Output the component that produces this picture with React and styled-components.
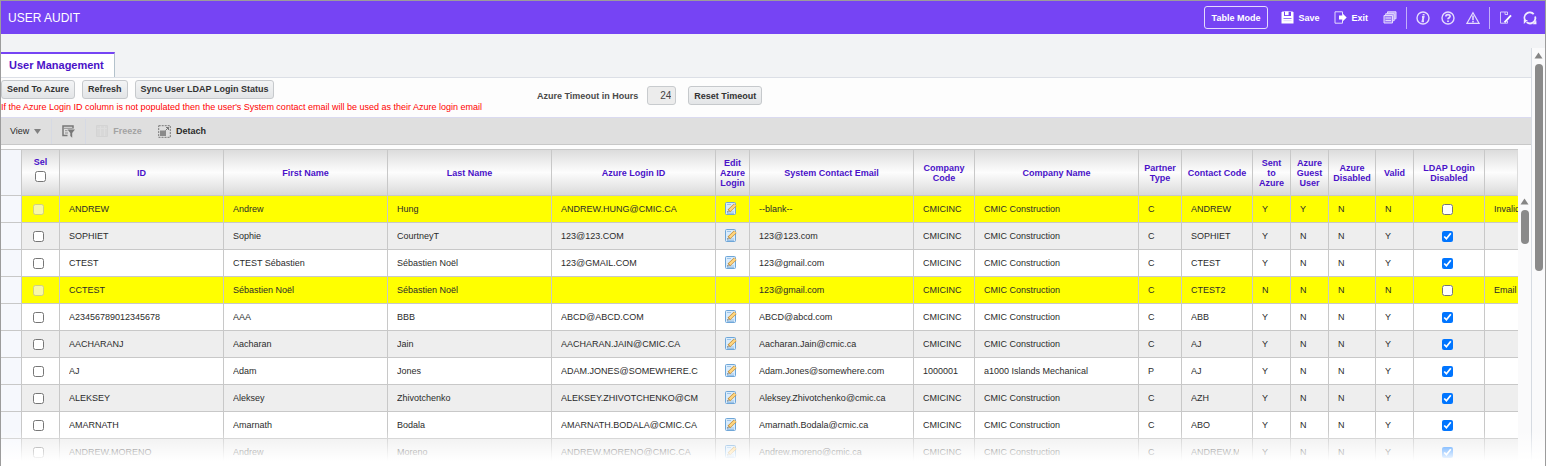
import { useState } from "react";
import styled, { createGlobalStyle } from "styled-components";

const GlobalStyle = createGlobalStyle`
  * {
    box-sizing: border-box;
  }
  body {
    margin: 0;
    overflow: hidden;
    background: #fff;
    color: #2b2b2b;
    font-family: "Liberation Sans", Arial, sans-serif;
    font-size: 9px;
  }
  button, input {
    font-family: inherit;
    font-size: inherit;
    margin: 0;
  }
`;

const Page = styled.div`
  position: relative;
  display: flex;
  flex-direction: column;
  height: 100vh;
  overflow: hidden;
  border: 1px solid #9c9c9c;
  border-bottom: 0;
  background: #f2f3f5;
`;
const Fade = styled.div`
  position: absolute;
  left: -1px;
  right: -1px;
  bottom: 0;
  height: 36px;
  background: linear-gradient(rgba(255, 255, 255, 0), #fff 86%);
  pointer-events: none;
`;

const Header = styled.header`
  display: flex;
  align-items: center;
  justify-content: space-between;
  flex: none;
  height: 33px;
  padding: 0 8px 0 7px;
  background: #7644f4;
  color: #fff;
`;
const Title = styled.h1`
  margin: 0;
  font-size: 12px;
  font-weight: 400;
`;
const Actions = styled.div`
  display: flex;
  align-items: center;
  gap: 11px;
`;
const ModeButton = styled.button`
  height: 23px;
  margin-right: 2px;
  padding: 0 7px;
  border: 1px solid #e4dafd;
  border-radius: 3px;
  background: transparent;
  color: #fff;
  font-weight: 700;
  white-space: nowrap;
`;
const HeaderButton = styled.button`
  display: flex;
  align-items: center;
  gap: 4px;
  padding: 0;
  margin-right: ${(props) => (props.$labelled ? "4px" : "0")};
  border: 0;
  background: transparent;
  color: #fff;
  font-weight: 700;
`;
const Rule = styled.span`
  width: 1px;
  height: 22px;
  margin: 0 -2px;
  background: #c3aefa;
`;

const Body = styled.div`
  display: flex;
  flex: 1;
  min-height: 0;
  padding-top: 14px;
`;
const Main = styled.main`
  display: flex;
  flex-direction: column;
  flex: 1;
  min-width: 0;
  border-right: 1px solid #d6dbe2;
  background: #fdfdfd;
`;
const Tabs = styled.nav`
  display: flex;
  padding-top: 4px;
  border-bottom: 1px solid #dcdfe6;
  background: #f2f3f5;
`;
const Tab = styled.a`
  height: 25px;
  padding: 0 10px 0 8px;
  border-top: 2px solid #7644f4;
  border-right: 1px solid #b4c2cc;
  background: #fff;
  color: #4a12c8;
  font-size: 11px;
  font-weight: 700;
  line-height: 22px;
  text-decoration: none;
`;

const Controls = styled.div`
  display: flex;
  align-items: center;
  gap: 55px;
  height: 39px;
`;
const ButtonRow = styled.div`
  display: flex;
  gap: 7px;
`;
const Button = styled.button`
  height: 19px;
  padding: 0 5px;
  border: 1px solid #c6c9cc;
  border-radius: 3px;
  background: linear-gradient(#f3f4f5, #e3e5e7);
  color: #333;
  font-weight: 700;
  white-space: nowrap;
`;
const Notice = styled.p`
  margin: 0;
  color: #f00;
  line-height: 17px;
  white-space: nowrap;
`;
const Timeout = styled.div`
  display: flex;
  align-items: center;
  padding-bottom: 4px;
`;
const TimeoutLabel = styled.label`
  margin-right: 9px;
  font-weight: 700;
  color: #4a4a4a;
`;
const TimeoutInput = styled.input`
  width: 29px;
  height: 19px;
  margin-right: 12px;
  padding: 0 4px;
  border: 1px solid #c8cbce;
  border-radius: 3px;
  background: #ececec;
  color: #444;
  font-size: 10px;
  text-align: right;
`;

const Toolbar = styled.div`
  display: flex;
  align-items: center;
  flex: none;
  height: 28px;
  margin-bottom: 4px;
  padding-left: 9px;
  border-top: 1px solid #dadaf0;
  border-bottom: 1px solid #c8c8c8;
  background: #dfdfdf;
`;
const ToolButton = styled.button`
  display: flex;
  align-items: center;
  gap: 5px;
  padding: 0;
  margin-right: ${(props) => props.$after || 0}px;
  border: 0;
  background: transparent;
  color: #2b2b2b;
  font-weight: ${(props) => (props.$bold ? 700 : 400)};
  &:disabled {
    color: #a3a3a3;
  }
`;
const ToolRule = styled.span`
  width: 1px;
  height: 25px;
  margin: 0 10px;
  background: #d6dae4;
`;

const GridArea = styled.div`
  display: flex;
  flex: 1;
  min-height: 0;
  overflow: hidden;
`;
const Table = styled.table`
  flex: 1;
  width: 100%;
  min-width: 0;
  table-layout: fixed;
  border-collapse: separate;
  border-spacing: 0;
  border-top: 1px solid #c8c8c8;
  align-self: flex-start;
`;
const HeadCell = styled.th`
  height: 46px;
  padding: 0 4px;
  border-right: 1px solid #c8c8c8;
  border-bottom: 1px solid #c8c8c8;
  background: linear-gradient(#dcdcdc, #fdfdfd 50%, #dadada);
  color: #4a12c8;
  font-weight: 700;
  line-height: 10px;
  text-align: center;
  &:first-child {
    background: #f4f6fb;
  }
  &:last-child {
    border-right-color: #dcdcdc;
  }
`;
const SelLabel = styled.label`
  display: flex;
  flex-direction: column;
  align-items: center;
  gap: 4px;
  padding-bottom: 6px;
`;
const Row = styled.tr`
  background: ${(props) => (props.$flagged ? "#ff0" : props.$even ? "#eee" : "#fff")};
`;
const Cell = styled.td`
  height: 27px;
  padding: 0 ${(props) => props.$right || 9}px 0 9px;
  border-right: 1px solid #c8c8c8;
  border-bottom: 1px solid #c8c8c8;
  vertical-align: middle;
  &:first-child {
    padding: 0;
    background: #f6f8fd;
  }
  &:last-child {
    padding-right: 0;
    border-right: 0;
  }
`;
const Text = styled.div`
  overflow: hidden;
  white-space: nowrap;
`;
const Check = styled.input`
  display: block;
  width: 11px;
  height: 11px;
  margin: 0 auto;
`;
const EditButton = styled.button`
  display: block;
  padding: 0;
  border: 0;
  background: transparent;
`;

const Track = styled.div`
  display: flex;
  flex-direction: column;
  align-items: center;
  flex: none;
  width: 13px;
  padding-top: ${(props) => props.$top}px;
  background: #fafafb;
`;
const Thumb = styled.div`
  width: 8px;
  height: ${(props) => props.$length}px;
  margin-top: 5px;
  border-radius: 4px;
  background: #8a8a8a;
`;

const SaveIcon = () => (
  <svg width="13" height="13" viewBox="0 0 13 13">
    <path fill="#fff" d="M1.5 .5H11.5l1 1v11H.5V1.500z" />
    <path fill="#7644f4" d="M3 1h7v4H3zM2.500 7.200h8v.8h-8z" />
    <path fill="#fff" d="M4 .5h3.600v3.600H4z" />
    <path fill="#cbbafa" d="M2.500 9.500h8v.6h-8z" />
  </svg>
);
const ExitIcon = () => (
  <svg width="13" height="13" viewBox="0 0 13 13">
    <path fill="none" stroke="#e4dafd" d="M8.500 3.500V.8H1v11.400h7.500V9.500" />
    <path fill="#fff" d="M5 4.500h3.300V2.300L12.700 6.500 8.300 10.700V8.500H5z" />
  </svg>
);
const WindowsIcon = () => (
  <svg width="14" height="13" viewBox="0 0 14 13">
    <path fill="#b79ff9" stroke="#e4dafd" d="M4.500 .8h8.500v7H4.500z" />
    <path fill="#a88af8" stroke="#e4dafd" d="M2.700 2.700h8.500v7H2.700z" />
    <path fill="#a080f7" stroke="#e4dafd" d="M1 4.500h8.500v7.500H1z" />
    <path stroke="#e4dafd" d="M2.500 7h5.500M2.500 9.500h5.500" />
  </svg>
);
const InfoIcon = () => (
  <svg width="14" height="14" viewBox="0 0 14 14" fill="none" stroke="#e4dafd">
    <circle cx="7" cy="7" r="6" strokeWidth="1.400" />
    <path strokeWidth="1.900" d="M6 6h1.500L6.500 10.200H8M7.600 2.900v1.700" />
  </svg>
);
const HelpIcon = () => (
  <svg width="14" height="14" viewBox="0 0 14 14" fill="none" stroke="#e4dafd">
    <circle cx="7" cy="7" r="6" strokeWidth="1.400" />
    <path strokeWidth="1.800" d="M4.900 5.500c0-2.600 4.200-2.500 4.200-.2C9.100 6.700 7 6.700 7 8.300M7 9.400v1.600" />
  </svg>
);
const WarningIcon = () => (
  <svg width="14" height="14" viewBox="0 0 14 14" fill="none" stroke="#e4dafd">
    <path strokeWidth="1.200" d="M7 1.800L13 12.300H1z" />
    <path strokeWidth="1.600" d="M7 4.500v4.700M7 10v1.500" />
  </svg>
);
const NoteIcon = () => (
  <svg width="13" height="13" viewBox="0 0 13 13" fill="none" stroke="#d6c8fc">
    <path d="M8.500 4V1H1.500v11.200H8.500V10M6 1v2.500h2.500" />
    <path stroke="#fff" strokeWidth="1.900" d="M12 4.300L5.500 11.300" />
  </svg>
);
const RefreshIcon = () => (
  <svg width="14" height="14" viewBox="0 0 14 14" fill="none" stroke="#f1ecfe">
    <path strokeWidth="1.800" d="M2.300 9.600A5.300 5.300 0 0 1 10.700 3.200M12.100 5.500A5.300 5.300 0 0 1 3.600 11.100" />
    <path fill="#f1ecfe" stroke="none" d="M.8 13V9l4.200 0zM9.500 13.200l3.800-4 .2 4z" />
  </svg>
);
const ArrowDown = () => (
  <svg width="7" height="5" viewBox="0 0 7 5">
    <path fill="#808080" d="M0 0h7L3.500 5z" />
  </svg>
);
const ArrowUp = () => (
  <svg width="9" height="7" viewBox="0 0 9 7">
    <path fill="#858585" d="M4.500 .5L8.500 6.500H.5z" />
  </svg>
);
const FilterIcon = () => (
  <svg width="13" height="13" viewBox="0 0 13 13">
    <path fill="none" stroke="#777" strokeWidth="1.500" d="M11 3.500V1H1v9.500h4.500" />
    <path fill="none" stroke="#8f8f8f" d="M1 3.300h9.500M3 5.700h2.500M3 8h3" />
    <path fill="#777" d="M5.500 4.500h7.500L10.200 8v4.700L8.300 11V8z" />
  </svg>
);
const FreezeIcon = () => (
  <svg width="12" height="12" viewBox="0 0 12 12">
    <path fill="#d8d8d8" stroke="#d4d4d4" d="M.5 .5h11v11H.5z" />
    <path stroke="#dedede" d="M4.500 1v10M8.500 1v10M1 3.500h10" />
  </svg>
);
const DetachIcon = () => (
  <svg width="13" height="13" viewBox="0 0 13 13">
    <path fill="none" stroke="#777" strokeDasharray="2 1" d="M.7 .7h11.600v11.600H.7z" />
    <path fill="#8a8a8a" d="M2 5.500h6v5.500H2z" />
    <path fill="none" stroke="#777" d="M7.500 5.500l3-3M8 2.500h2.500V5" />
  </svg>
);
const EditIcon = () => (
  <svg width="12" height="13" viewBox="0 0 12 13">
    <rect x=".5" y=".5" width="10" height="12" rx="1" fill="#d9ecfc" stroke="#6ea6d8" />
    <path stroke="#9cc3e8" d="M2 10h7M2 11.500h7M2 2.500h4" />
    <path stroke="#c08a35" strokeWidth="3.600" d="M3.800 9L10.300 2.800" />
    <path stroke="#ffd680" strokeWidth="2.300" d="M4.500 8.300L10.300 2.800" />
    <path fill="#5b4a35" d="M2.200 10.600l.5-1.700 1.200 1.200z" />
  </svg>
);

// width left out: the column takes what is left over
const columns = [
  { key: "id", label: "ID", width: 164, right: 17 },
  { key: "first", label: "First Name", width: 164, right: 17 },
  { key: "last", label: "Last Name", width: 164, right: 17 },
  { key: "login", label: "Azure Login ID", width: 164, right: 17 },
  { key: "edit", label: "Edit Azure Login", width: 34 },
  { key: "email", label: "System Contact Email", width: 164, right: 17 },
  { key: "code", label: "Company Code", width: 61 },
  { key: "company", label: "Company Name", width: 164, right: 17 },
  { key: "partner", label: "Partner Type", width: 43 },
  { key: "contact", label: "Contact Code", width: 71, right: 13 },
  { key: "sent", label: "Sent to Azure", width: 38 },
  { key: "guest", label: "Azure Guest User", width: 38 },
  { key: "disabled", label: "Azure Disabled", width: 47 },
  { key: "valid", label: "Valid", width: 38 },
  { key: "ldap", label: "LDAP Login Disabled", width: 71 },
  { key: "message", label: "" },
];

const cmic = { code: "CMICINC", company: "CMIC Construction", partner: "C", sent: "Y", guest: "N", disabled: "N", valid: "Y", ldap: true };

const users = [
  { ...cmic, id: "ANDREW", first: "Andrew", last: "Hung", login: "ANDREW.HUNG@CMIC.CA", email: "--blank--", contact: "ANDREW", guest: "Y", valid: "N", ldap: false, message: "Invalid", flagged: true },
  { ...cmic, id: "SOPHIET", first: "Sophie", last: "CourtneyT", login: "123@123.COM", email: "123@123.com", contact: "SOPHIET" },
  { ...cmic, id: "CTEST", first: "CTEST Sébastien", last: "Sébastien Noël", login: "123@GMAIL.COM", email: "123@gmail.com", contact: "CTEST" },
  { ...cmic, id: "CCTEST", first: "Sébastien Noël", last: "Sébastien Noël", login: "", email: "123@gmail.com", contact: "CTEST2", sent: "N", valid: "N", ldap: false, message: "Email", flagged: true },
  { ...cmic, id: "A23456789012345678", first: "AAA", last: "BBB", login: "ABCD@ABCD.COM", email: "ABCD@abcd.com", contact: "ABB" },
  { ...cmic, id: "AACHARANJ", first: "Aacharan", last: "Jain", login: "AACHARAN.JAIN@CMIC.CA", email: "Aacharan.Jain@cmic.ca", contact: "AJ" },
  { ...cmic, id: "AJ", first: "Adam", last: "Jones", login: "ADAM.JONES@SOMEWHERE.COM", email: "Adam.Jones@somewhere.com", code: "1000001", company: "a1000 Islands Mechanical", partner: "P", contact: "AJ" },
  { ...cmic, id: "ALEKSEY", first: "Aleksey", last: "Zhivotchenko", login: "ALEKSEY.ZHIVOTCHENKO@CMIC.CA", email: "Aleksey.Zhivotchenko@cmic.ca", contact: "AZH" },
  { ...cmic, id: "AMARNATH", first: "Amarnath", last: "Bodala", login: "AMARNATH.BODALA@CMIC.CA", email: "Amarnath.Bodala@cmic.ca", contact: "ABO" },
  { ...cmic, id: "ANDREW.MORENO", first: "Andrew", last: "Moreno", login: "ANDREW.MORENO@CMIC.CA", email: "Andrew.moreno@cmic.ca", contact: "ANDREW.M" },
];

function UserCell({ user, column }) {
  if (column.key === "ldap") {
    return (
      <Cell $right={13}>
        <Check type="checkbox" defaultChecked={user.ldap} aria-label={`LDAP login disabled for ${user.id}`} />
      </Cell>
    );
  }
  if (column.key === "edit") {
    return (
      <Cell>
        {user.login && (
          <EditButton aria-label={`Edit Azure login of ${user.id}`}>
            <EditIcon />
          </EditButton>
        )}
      </Cell>
    );
  }
  return (
    <Cell $right={column.right}>
      <Text>{user[column.key]}</Text>
    </Cell>
  );
}

export default function App() {
  const [selected, setSelected] = useState([]);
  const [hours, setHours] = useState("24");
  const selectable = users.filter((u) => !u.flagged).map((u) => u.id);

  const toggle = (id) => {
    setSelected(selected.includes(id) ? selected.filter((s) => s !== id) : [...selected, id]);
  };

  return (
    <Page>
      <GlobalStyle />
      <Header>
        <Title>USER AUDIT</Title>
        <Actions>
          <ModeButton>Table Mode</ModeButton>
          <HeaderButton $labelled><SaveIcon />Save</HeaderButton>
          <HeaderButton $labelled><ExitIcon />Exit</HeaderButton>
          <HeaderButton aria-label="Windows"><WindowsIcon /></HeaderButton>
          <Rule />
          <HeaderButton aria-label="Information"><InfoIcon /></HeaderButton>
          <HeaderButton aria-label="Help"><HelpIcon /></HeaderButton>
          <HeaderButton aria-label="Warnings"><WarningIcon /></HeaderButton>
          <Rule />
          <HeaderButton aria-label="Notes"><NoteIcon /></HeaderButton>
          <HeaderButton aria-label="Reload"><RefreshIcon /></HeaderButton>
        </Actions>
      </Header>
      <Body>
        <Main>
          <Tabs>
            <Tab href="#users">User Management</Tab>
          </Tabs>
          <Controls>
            <div>
              <ButtonRow>
                <Button>Send To Azure</Button>
                <Button>Refresh</Button>
                <Button>Sync User LDAP Login Status</Button>
              </ButtonRow>
              <Notice>
                If the Azure Login ID column is not populated then the user's System contact email will be used as their Azure login email
              </Notice>
            </div>
            <Timeout>
              <TimeoutLabel htmlFor="timeout">Azure Timeout in Hours</TimeoutLabel>
              <TimeoutInput id="timeout" value={hours} onChange={(e) => setHours(e.target.value)} />
              <Button onClick={() => setHours("24")}>Reset Timeout</Button>
            </Timeout>
          </Controls>
          <Toolbar>
            <ToolButton>View <ArrowDown /></ToolButton>
            <ToolRule />
            <ToolButton aria-label="Query by example"><FilterIcon /></ToolButton>
            <ToolRule />
            <ToolButton $after={16} $bold disabled><FreezeIcon />Freeze</ToolButton>
            <ToolButton $bold><DetachIcon />Detach</ToolButton>
          </Toolbar>
          <GridArea>
            <Table>
              <colgroup>
                <col width="21" />
                <col width="38" />
                {columns.map((c) => (
                  <col key={c.key} width={c.width} />
                ))}
              </colgroup>
              <thead>
                <tr>
                  <HeadCell />
                  <HeadCell>
                    <SelLabel>
                      Sel
                      <Check
                        type="checkbox"
                        checked={selected.length === selectable.length}
                        onChange={(e) => setSelected(e.target.checked ? selectable : [])}
                      />
                    </SelLabel>
                  </HeadCell>
                  {columns.map((c) => (
                    <HeadCell key={c.key}>{c.label}</HeadCell>
                  ))}
                </tr>
              </thead>
              <tbody>
                {users.map((user, i) => (
                  <Row key={user.id} $flagged={user.flagged} $even={i % 2 === 1}>
                    <Cell />
                    <Cell $right={13}>
                      <Check
                        type="checkbox"
                        aria-label={`Select ${user.id}`}
                        disabled={user.flagged}
                        checked={selected.includes(user.id)}
                        onChange={() => toggle(user.id)}
                      />
                    </Cell>
                    {columns.map((c) => (
                      <UserCell key={c.key} user={user} column={c} />
                    ))}
                  </Row>
                ))}
              </tbody>
            </Table>
            <Track $top={49}>
              <ArrowUp />
              <Thumb $length={34} />
            </Track>
          </GridArea>
        </Main>
        <Track $top={4}>
          <ArrowUp />
          <Thumb $length={207} />
        </Track>
      </Body>
      <Fade />
    </Page>
  );
}
